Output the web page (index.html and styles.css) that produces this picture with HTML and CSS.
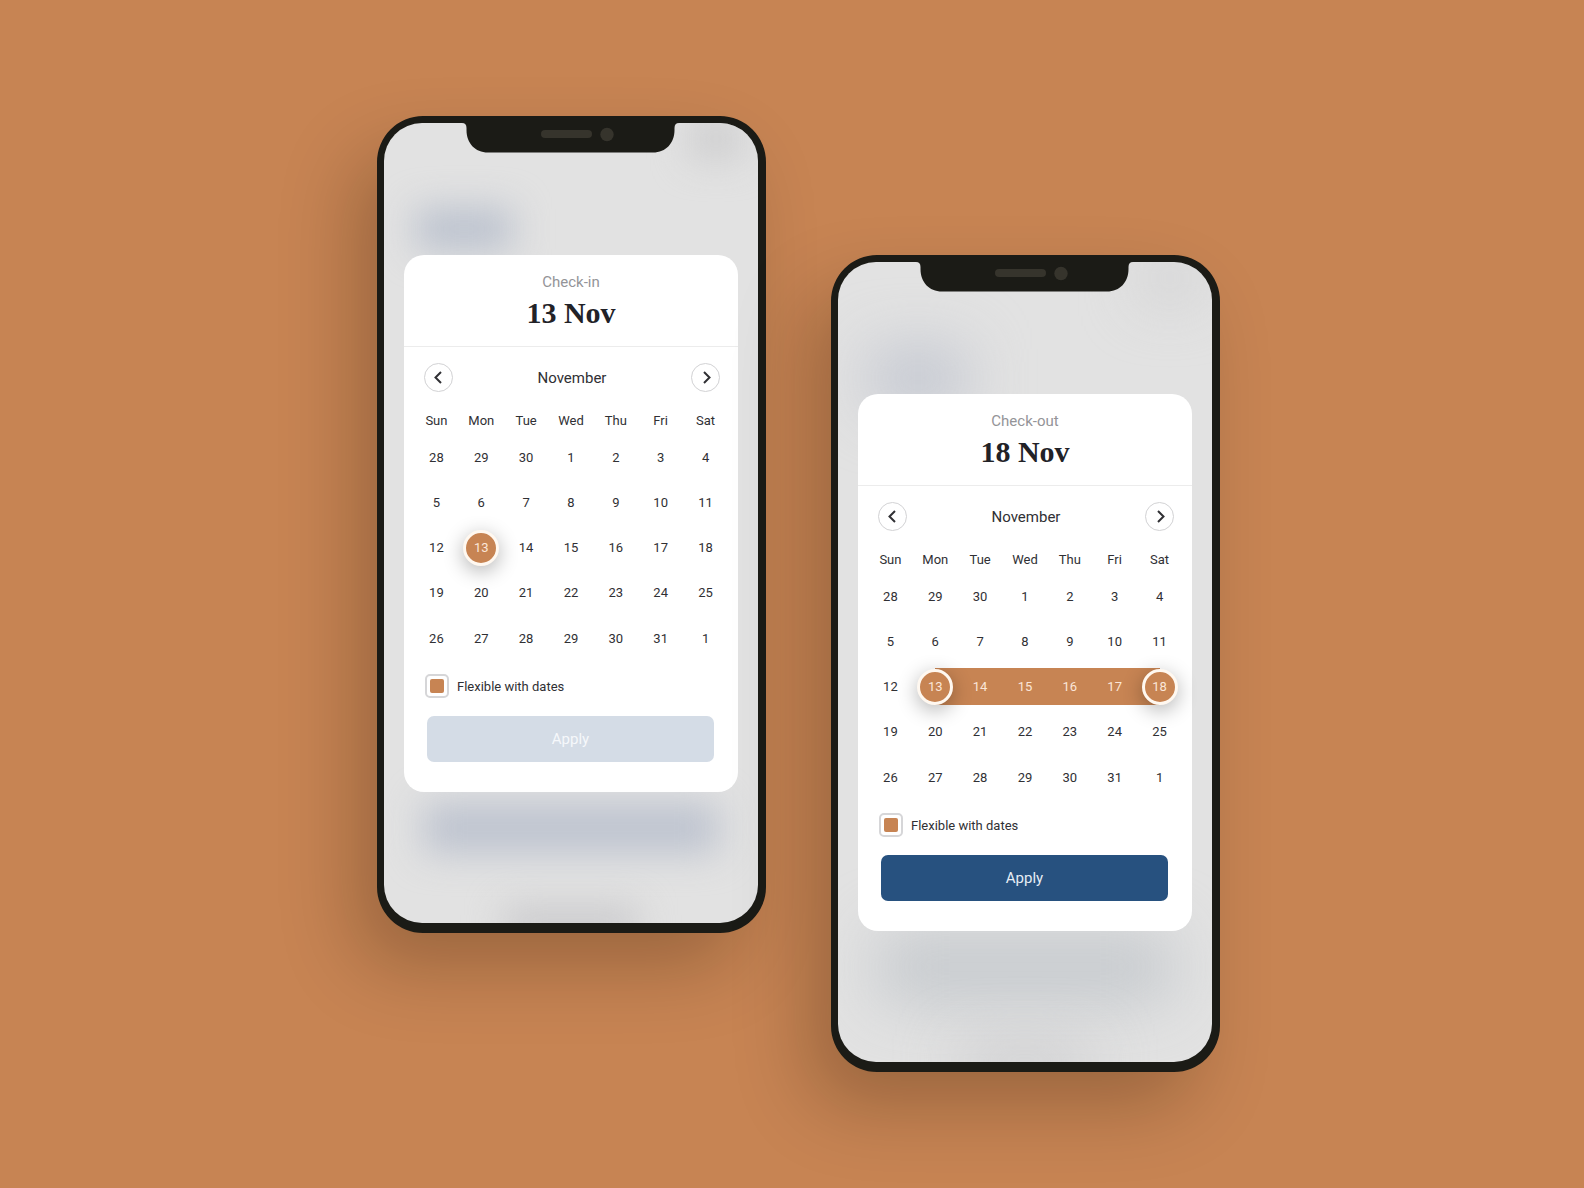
FILE: index.html
```html
<!DOCTYPE html>
<html lang="en">
<head>
<meta charset="utf-8">
<meta name="viewport" content="width=device-width, initial-scale=1">
<title>Check-in and check-out dates</title>
<link rel="stylesheet" href="styles.css">
</head>
<body>
<main class="stage">

  <section class="phone" aria-label="Check-in">
    <svg class="notch" width="217" height="30" viewBox="0 0 217 30" aria-hidden="true">
      <path fill="#1b1b16" d="M0 0H217C214 0 212.500 1.500 212.500 5V7C212.500 20 204 29.500 191 29.500H26C13 29.500 4.500 20 4.500 7V5C4.500 1.500 3 0 0 0Z"/>
      <rect x="79" y="7" width="51" height="8" rx="4" fill="#36342c"/>
      <circle cx="145" cy="11.500" r="6.700" fill="#36342c"/>
    </svg>
    <div class="screen">
      <div class="backdrop" aria-hidden="true">
        <span class="haze haze-status"></span>
        <span class="haze haze-title"></span>
        <span class="haze haze-button"></span>
        <span class="haze haze-home"></span>
      </div>
      <div class="card">
        <header class="card-head">
          <p class="kind">Check-in</p>
          <h2 class="date">13 Nov</h2>
        </header>
        <div class="month">
          <button class="arrow" type="button" aria-label="Previous month"><svg width="27" height="27" viewBox="0 0 27 27"><path d="M16 8L10.500 13.500L16 19"/></svg></button>
          <h3 class="month-name">November</h3>
          <button class="arrow" type="button" aria-label="Next month"><svg width="27" height="27" viewBox="0 0 27 27"><path d="M12 8L17.500 13.500L12 19"/></svg></button>
        </div>
        <table class="days">
          <thead>
            <tr><th scope="col">Sun</th><th scope="col">Mon</th><th scope="col">Tue</th><th scope="col">Wed</th><th scope="col">Thu</th><th scope="col">Fri</th><th scope="col">Sat</th></tr>
          </thead>
          <tbody>
            <tr><td><button type="button">28</button></td><td><button type="button">29</button></td><td><button type="button">30</button></td><td><button type="button">1</button></td><td><button type="button">2</button></td><td><button type="button">3</button></td><td><button type="button">4</button></td></tr>
            <tr><td><button type="button">5</button></td><td><button type="button">6</button></td><td><button type="button">7</button></td><td><button type="button">8</button></td><td><button type="button">9</button></td><td><button type="button">10</button></td><td><button type="button">11</button></td></tr>
            <tr><td><button type="button">12</button></td><td><button class="picked" type="button" aria-pressed="true">13</button></td><td><button type="button">14</button></td><td><button type="button">15</button></td><td><button type="button">16</button></td><td><button type="button">17</button></td><td><button type="button">18</button></td></tr>
            <tr><td><button type="button">19</button></td><td><button type="button">20</button></td><td><button type="button">21</button></td><td><button type="button">22</button></td><td><button type="button">23</button></td><td><button type="button">24</button></td><td><button type="button">25</button></td></tr>
            <tr><td><button type="button">26</button></td><td><button type="button">27</button></td><td><button type="button">28</button></td><td><button type="button">29</button></td><td><button type="button">30</button></td><td><button type="button">31</button></td><td><button type="button">1</button></td></tr>
          </tbody>
        </table>
        <div class="flexible">
          <input class="tick" type="checkbox" id="flexible-in" checked>
          <label for="flexible-in">Flexible with dates</label>
        </div>
        <button class="apply" type="button" disabled>Apply</button>
      </div>
    </div>
  </section>

  <section class="phone phone-lower" aria-label="Check-out">
    <svg class="notch" width="217" height="30" viewBox="0 0 217 30" aria-hidden="true">
      <path fill="#1b1b16" d="M0 0H217C214 0 212.500 1.500 212.500 5V7C212.500 20 204 29.500 191 29.500H26C13 29.500 4.500 20 4.500 7V5C4.500 1.500 3 0 0 0Z"/>
      <rect x="79" y="7" width="51" height="8" rx="4" fill="#36342c"/>
      <circle cx="145" cy="11.500" r="6.700" fill="#36342c"/>
    </svg>
    <div class="screen">
      <div class="backdrop backdrop-soft" aria-hidden="true">
        <span class="haze haze-status"></span>
        <span class="haze haze-title"></span>
        <span class="haze haze-button"></span>
        <span class="haze haze-home"></span>
      </div>
      <div class="card">
        <header class="card-head">
          <p class="kind">Check-out</p>
          <h2 class="date">18 Nov</h2>
        </header>
        <div class="month">
          <button class="arrow" type="button" aria-label="Previous month"><svg width="27" height="27" viewBox="0 0 27 27"><path d="M16 8L10.500 13.500L16 19"/></svg></button>
          <h3 class="month-name">November</h3>
          <button class="arrow" type="button" aria-label="Next month"><svg width="27" height="27" viewBox="0 0 27 27"><path d="M12 8L17.500 13.500L12 19"/></svg></button>
        </div>
        <table class="days">
          <thead>
            <tr><th scope="col">Sun</th><th scope="col">Mon</th><th scope="col">Tue</th><th scope="col">Wed</th><th scope="col">Thu</th><th scope="col">Fri</th><th scope="col">Sat</th></tr>
          </thead>
          <tbody>
            <tr><td><button type="button">28</button></td><td><button type="button">29</button></td><td><button type="button">30</button></td><td><button type="button">1</button></td><td><button type="button">2</button></td><td><button type="button">3</button></td><td><button type="button">4</button></td></tr>
            <tr><td><button type="button">5</button></td><td><button type="button">6</button></td><td><button type="button">7</button></td><td><button type="button">8</button></td><td><button type="button">9</button></td><td><button type="button">10</button></td><td><button type="button">11</button></td></tr>
            <tr class="stay"><td><button type="button">12</button></td><td><button class="picked" type="button" aria-pressed="true">13</button></td><td class="range"><button type="button">14</button></td><td class="range"><button type="button">15</button></td><td class="range"><button type="button">16</button></td><td class="range"><button type="button">17</button></td><td><button class="picked" type="button" aria-pressed="true">18</button></td></tr>
            <tr><td><button type="button">19</button></td><td><button type="button">20</button></td><td><button type="button">21</button></td><td><button type="button">22</button></td><td><button type="button">23</button></td><td><button type="button">24</button></td><td><button type="button">25</button></td></tr>
            <tr><td><button type="button">26</button></td><td><button type="button">27</button></td><td><button type="button">28</button></td><td><button type="button">29</button></td><td><button type="button">30</button></td><td><button type="button">31</button></td><td><button type="button">1</button></td></tr>
          </tbody>
        </table>
        <div class="flexible">
          <input class="tick" type="checkbox" id="flexible-out" checked>
          <label for="flexible-out">Flexible with dates</label>
        </div>
        <button class="apply" type="button">Apply</button>
      </div>
    </div>
  </section>

</main>
</body>
</html>
```
FILE: styles.css
```css
:root {
  --copper: #c78453;
  --bezel: #1b1b16;
  --ink: #303034;
  --navy: #27517f;
}

* {
  box-sizing: border-box;
}

body {
  margin: 0;
  background: var(--copper);
  color: var(--ink);
  font-family: Roboto, "Liberation Sans", sans-serif;
  font-size: 13px;
}

button {
  padding: 0;
  border: 0;
  background: none;
  color: inherit;
  font: inherit;
  cursor: pointer;
}

.stage {
  display: flex;
  flex-wrap: wrap;
  justify-content: center;
  align-items: flex-start;
  gap: 65px;
  min-height: 100vh;
  padding: 116px 32px 116px 45px;
}

/* Phone body */
.phone {
  position: relative;
  flex: 0 1 389px;
  border: solid var(--bezel);
  border-width: 7px 8px 10px 7px;
  border-radius: 46px;
  background: var(--bezel);
  box-shadow: -24px 36px 76px -4px rgba(20, 10, 0, 0.25);
}

.phone-lower {
  margin-top: 139px;
}

.notch {
  position: absolute;
  z-index: 2;
  top: 0;
  left: calc(50% - 109px);
}

.screen {
  position: relative;
  overflow: hidden;
  padding: 132px 20px 131px;
  border-radius: 38px;
  background: #e2e2e2;
}

/* Out-of-focus page behind the card */
.backdrop {
  position: absolute;
  inset: 0;
}

.haze {
  position: absolute;
  filter: blur(18px);
}

.haze-status {
  top: -4px;
  right: 16px;
  width: 52px;
  height: 40px;
  background: #cdcdce;
}

.haze-title {
  top: 86px;
  left: 32px;
  width: 96px;
  height: 40px;
  background: #b9c0cd;
}

.haze-button {
  right: 40px;
  bottom: 70px;
  left: 40px;
  height: 50px;
  background: #bdc3cf;
}

.haze-home {
  right: 120px;
  bottom: -12px;
  left: 120px;
  height: 26px;
  background: #c4c4c7;
}

.backdrop-soft .haze {
  filter: blur(30px);
}

.backdrop-soft .haze-title {
  height: 60px;
  background: #c2c6d0;
}

.backdrop-soft .haze-button {
  bottom: 60px;
  height: 70px;
  background: #c6cace;
}

/* Date card */
.card {
  position: relative;
  padding-bottom: 30px;
  border-radius: 20px;
  background: #fff;
}

.card-head {
  display: flex;
  flex-direction: column;
  align-items: center;
  height: 92px;
  padding-top: 17px;
  border-bottom: 1px solid #ececec;
}

.kind {
  margin: 0;
  color: #949498;
  font-size: 15px;
  line-height: 20px;
}

.date {
  margin: 3px 0 0;
  color: #222227;
  font-family: "Liberation Serif", serif;
  font-size: 30px;
  font-weight: 700;
  line-height: 36px;
}

.month {
  display: flex;
  align-items: center;
  justify-content: space-between;
  padding: 16px 18px 0 20px;
}

.month-name {
  margin: 0;
  font-size: 15px;
  font-weight: 400;
  line-height: 20px;
}

.arrow {
  width: 29px;
  height: 29px;
  border: 1px solid #d2d2d4;
  border-radius: 50%;
}

.arrow svg {
  display: block;
  fill: none;
  stroke: var(--ink);
  stroke-width: 2;
}

.days {
  width: calc(100% - 20px);
  margin: 14px 10px 0;
  border-collapse: collapse;
  table-layout: fixed;
  text-align: center;
}

.days th {
  height: 29px;
  padding: 0;
  font-weight: 400;
}

.days td {
  height: 45px;
  padding: 0;
}

.days tr:last-child td {
  height: 47px;
}

.days td button {
  display: block;
  width: 36px;
  height: 36px;
  margin: 0 auto;
  border-radius: 50%;
}

.days .picked {
  position: relative;
  border: 3px solid #fff8f0;
  background: var(--copper);
  box-shadow: 0 5px 20px rgba(0, 0, 0, 0.3);
  color: #fbe6d8;
}

/* Bar from the middle of the second column to the middle of the last */
.stay {
  background: linear-gradient(to right, transparent 21.43%, var(--copper) 21.43%, var(--copper) 92.86%, transparent 92.86%) center / 100% 37px no-repeat;
}

.range {
  color: #fbe6d8;
}

.flexible {
  display: flex;
  align-items: center;
  gap: 8px;
  margin: 12px 21px 0;
}

.tick {
  appearance: none;
  width: 24px;
  height: 24px;
  margin: 0;
  padding: 3px;
  border: 2px solid #d6d6d8;
  border-radius: 5px;
  background: #fff;
}

.tick:checked::before {
  content: "";
  display: block;
  height: 14px;
  border-radius: 2px;
  background: var(--copper);
}

.apply {
  display: block;
  width: calc(100% - 47px);
  height: 46px;
  margin: 18px 24px 0 23px;
  border-radius: 7px;
  background: var(--navy);
  color: #e6edf5;
  font-size: 15px;
}

.apply:disabled {
  background: #d4dce6;
  color: #f6f8fb;
  cursor: default;
}
```
